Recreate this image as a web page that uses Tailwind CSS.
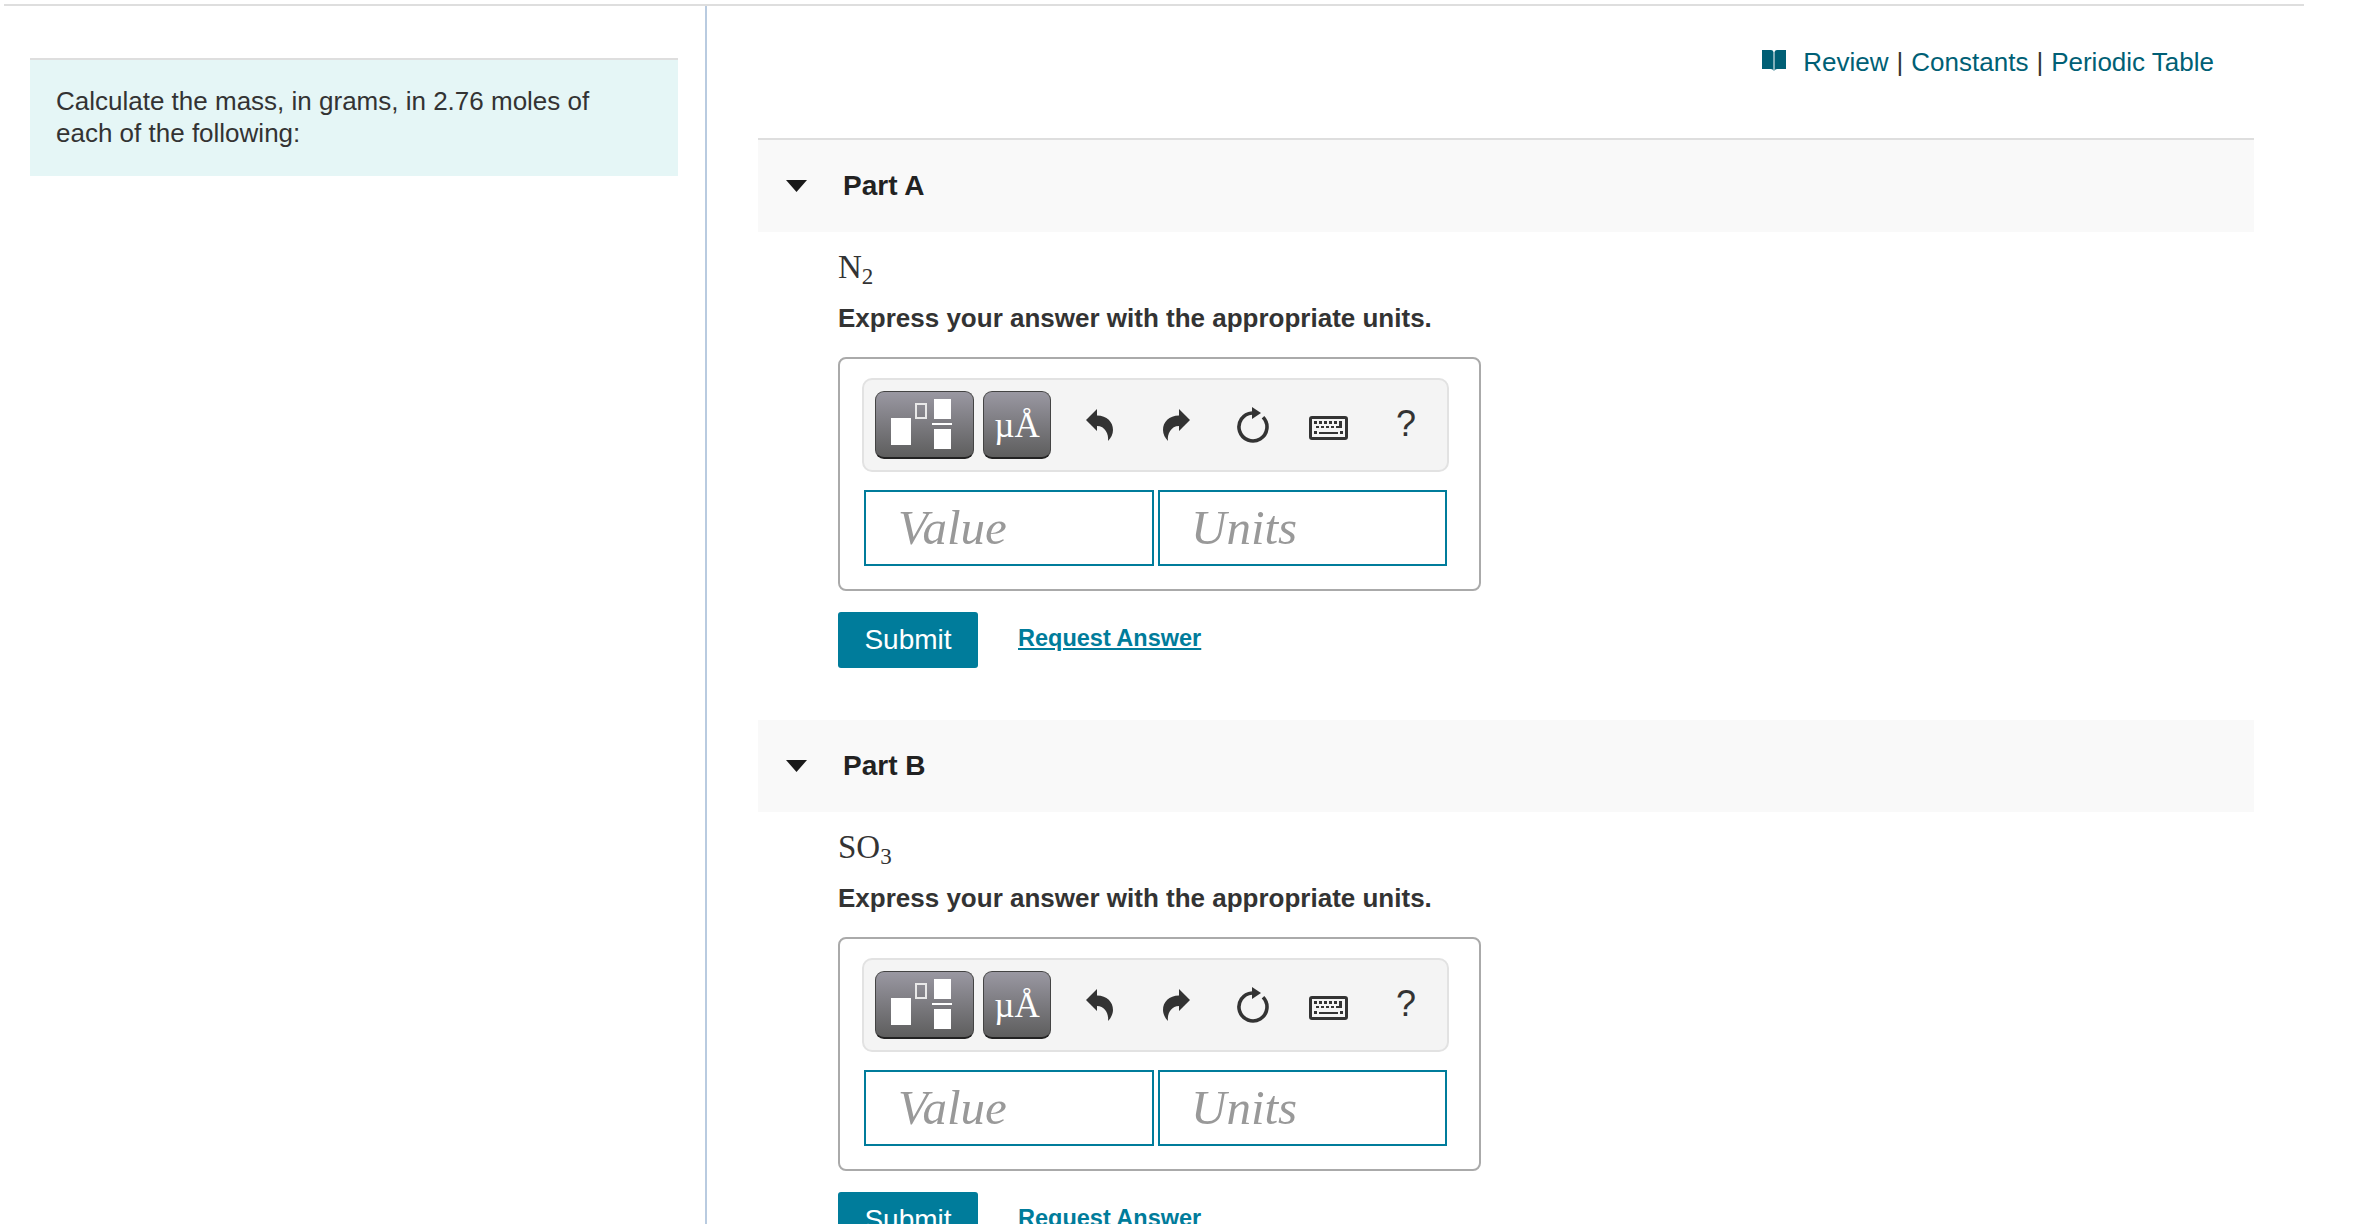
<!DOCTYPE html>
<html lang="en">
  <head>
    <meta charset="UTF-8" />
    <title>Part A / Part B</title>
    <script src="https://cdn.jsdelivr.net/npm/@tailwindcss/browser@4"></script>
  </head>
  <body class="relative bg-white font-['Liberation_Sans',sans-serif] text-[#333]">
    <div class="pt-1 pl-1 h-[1224px] overflow-hidden">
      <div class="flex w-[2300px] h-[1220px] border-t-2 border-[#dedede] overflow-hidden">
        <!-- Left column -->
        <div class="w-[703px] shrink-0 border-r-2 border-[#b9cbe0] pl-[26px] pt-[52px]">
          <div class="w-[648px] h-[118px] border-t-2 border-[#dedede] bg-[#e5f6f6] pl-[26px] pt-[25px] text-[26px] leading-[32px]">
            Calculate the mass, in grams, in 2.76 moles of<br />each of the following:
          </div>
        </div>

        <!-- Right column -->
        <div class="w-[1547px] shrink-0 pl-[51px]">
          <div class="w-[1496px]">
            <!-- Links -->
            <div class="h-[132px] flex items-start justify-end pr-[40px] pt-[40px] text-[26px] leading-[32px]">
              <svg class="w-6 h-[21px] mt-[4px] mr-[17px]" viewBox="0 0 24 21" fill="#005f75">
                <path d="M0 0 H9 Q11 0 11.5 2 V21 Q11 19 9 19 H0 Z" />
                <path d="M24 0 H15 Q13 0 12.5 2 V21 Q13 19 15 19 H24 Z" />
              </svg>
              <a class="text-[#005f75]">Review</a><span class="mx-[8px]">|</span><a class="text-[#005f75]">Constants</a><span class="mx-[8px]">|</span><a class="text-[#005f75]">Periodic Table</a>
            </div>

            <!-- Part A -->
            <section class="h-[580px]">
              <div class="h-[94px] border-t-2 border-[#dedede] bg-[#f9f9f9] flex items-center">
                <svg class="w-[21px] h-3 ml-7 mr-[36px]" viewBox="0 0 21 12" fill="#1a1a1a"><path d="M0 0 H21 L10.5 12 Z" /></svg>
                <h2 class="font-bold text-[28px] text-[#222]">Part A</h2>
              </div>
              <div class="pl-[80px]">
                <p class="font-['Liberation_Serif',serif] text-[33px] leading-[36px] mt-[17px]">N<sub class="text-[23px]">2</sub></p>
                <p class="font-bold text-[26px] leading-[32px] mt-[17px]">Express your answer with the appropriate units.</p>
                <div class="w-[643px] h-[234px] mt-[23px] border-2 border-[#aaaaaa] rounded-lg pt-[19px] pl-[22px]">
                  <div class="w-[587px] h-[94px] flex items-center border-2 border-[#e2e2e2] rounded-[10px] bg-[#f4f4f4] pl-[11px]">
                    <div class="w-[99px] h-[68px] rounded-[9px] border border-[#444] border-b-2 border-b-[#222] bg-gradient-to-b from-[#9a98a2] to-[#5e5e5e] relative">
                      <span class="absolute left-[15px] top-[26px] w-5 h-[27px] bg-white"></span>
                      <span class="absolute left-[39px] top-[11px] w-3 h-4 border-2 border-[#e8e8e8]"></span>
                      <span class="absolute left-[58px] top-[7px] w-[17px] h-5 bg-white"></span>
                      <span class="absolute left-[56px] top-[31px] w-5 h-[2px] bg-white"></span>
                      <span class="absolute left-[58px] top-[37px] w-[17px] h-5 bg-white"></span>
                    </div>
                    <div class="w-[68px] h-[68px] ml-[9px] pt-[3px] rounded-[9px] border border-[#444] border-b-2 border-b-[#222] bg-gradient-to-b from-[#9a98a2] to-[#5e5e5e] flex items-center justify-center font-['Liberation_Serif',serif] text-[35px] text-white">µÅ</div>
                    <svg class="w-[27px] h-8 ml-[35px] mt-[-1px]" viewBox="0 0 27 32" fill="#333"><path d="M0 11 L11 0 V6.5 C21 6.5 27 13 27 21 C27 25 25 29 22 32 C23 25 19 17 11 17 V22 Z" /></svg>
                    <svg class="w-[27px] h-8 ml-[50px] mt-[-1px]" viewBox="0 0 27 32" fill="#333"><path d="M27 11 L16 0 V6.5 C6 6.5 0 13 0 21 C0 25 2 29 5 32 C4 25 8 17 16 17 V22 Z" /></svg>
                    <svg class="w-8 h-9 ml-[47px]" viewBox="0 0 32 36" fill="none" stroke="#333" stroke-width="3.6"><path d="M26 10.2 A14 14 0 1 1 15 6" /><path d="M15 0 L24 6 L15 12 Z" fill="#333" stroke="none" /></svg>
                    <svg class="w-[39px] h-6 ml-10 mt-[5px]" viewBox="0 0 39 24" fill="#333"><path fill-rule="evenodd" d="M3 0 H36 Q39 0 39 3 V21 Q39 24 36 24 H3 Q0 24 0 21 V3 Q0 0 3 0 Z M3 3 V21 H36 V3 Z" /><path d="M5 5h3v3H5zM10 5h3v3h-3zM15 5h3v3h-3zM20 5h3v3h-3zM25 5h3v3h-3zM30 5h3v7h-6v-2h3zM7 10h3v2H7zM12 10h3v2h-3zM17 10h3v2h-3zM22 10h3v2h-3zM5 15h3v3H5zM10 16h19v2H10zM31 15h3v3h-3z" /></svg>
                    <span class="ml-[48px] mt-[-3px] text-[36px] leading-none text-[#333]">?</span>
                  </div>
                  <div class="flex gap-[4px] mt-[18px] ml-[2px]">
                    <div class="w-[290px] h-[76px] border-2 border-[#007c9b] pl-[32px] font-['Liberation_Serif',serif] italic text-[49px] leading-[72px] text-[#999]">Value</div>
                    <div class="w-[289px] h-[76px] border-2 border-[#007c9b] pl-[31px] font-['Liberation_Serif',serif] italic text-[49px] leading-[72px] text-[#999]">Units</div>
                  </div>
                </div>
                <div class="flex items-start mt-[21px]">
                  <button class="w-[140px] h-14 rounded-[3px] bg-[#007c9b] text-white text-[28px]">Submit</button>
                  <a class="ml-10 mt-[12px] font-bold text-[23.5px] leading-[28px] text-[#007c9b] underline">Request Answer</a>
                </div>
              </div>
            </section>

            <!-- Part B -->
            <section>
              <div class="h-[94px] border-t-2 border-white bg-[#f9f9f9] flex items-center">
                <svg class="w-[21px] h-3 ml-7 mr-[36px]" viewBox="0 0 21 12" fill="#1a1a1a"><path d="M0 0 H21 L10.5 12 Z" /></svg>
                <h2 class="font-bold text-[28px] text-[#222]">Part B</h2>
              </div>
              <div class="pl-[80px]">
                <p class="font-['Liberation_Serif',serif] text-[33px] leading-[36px] mt-[17px]">SO<sub class="text-[23px]">3</sub></p>
                <p class="font-bold text-[26px] leading-[32px] mt-[17px]">Express your answer with the appropriate units.</p>
                <div class="w-[643px] h-[234px] mt-[23px] border-2 border-[#aaaaaa] rounded-lg pt-[19px] pl-[22px]">
                  <div class="w-[587px] h-[94px] flex items-center border-2 border-[#e2e2e2] rounded-[10px] bg-[#f4f4f4] pl-[11px]">
                    <div class="w-[99px] h-[68px] rounded-[9px] border border-[#444] border-b-2 border-b-[#222] bg-gradient-to-b from-[#9a98a2] to-[#5e5e5e] relative">
                      <span class="absolute left-[15px] top-[26px] w-5 h-[27px] bg-white"></span>
                      <span class="absolute left-[39px] top-[11px] w-3 h-4 border-2 border-[#e8e8e8]"></span>
                      <span class="absolute left-[58px] top-[7px] w-[17px] h-5 bg-white"></span>
                      <span class="absolute left-[56px] top-[31px] w-5 h-[2px] bg-white"></span>
                      <span class="absolute left-[58px] top-[37px] w-[17px] h-5 bg-white"></span>
                    </div>
                    <div class="w-[68px] h-[68px] ml-[9px] pt-[3px] rounded-[9px] border border-[#444] border-b-2 border-b-[#222] bg-gradient-to-b from-[#9a98a2] to-[#5e5e5e] flex items-center justify-center font-['Liberation_Serif',serif] text-[35px] text-white">µÅ</div>
                    <svg class="w-[27px] h-8 ml-[35px] mt-[-1px]" viewBox="0 0 27 32" fill="#333"><path d="M0 11 L11 0 V6.5 C21 6.5 27 13 27 21 C27 25 25 29 22 32 C23 25 19 17 11 17 V22 Z" /></svg>
                    <svg class="w-[27px] h-8 ml-[50px] mt-[-1px]" viewBox="0 0 27 32" fill="#333"><path d="M27 11 L16 0 V6.5 C6 6.5 0 13 0 21 C0 25 2 29 5 32 C4 25 8 17 16 17 V22 Z" /></svg>
                    <svg class="w-8 h-9 ml-[47px]" viewBox="0 0 32 36" fill="none" stroke="#333" stroke-width="3.6"><path d="M26 10.2 A14 14 0 1 1 15 6" /><path d="M15 0 L24 6 L15 12 Z" fill="#333" stroke="none" /></svg>
                    <svg class="w-[39px] h-6 ml-10 mt-[5px]" viewBox="0 0 39 24" fill="#333"><path fill-rule="evenodd" d="M3 0 H36 Q39 0 39 3 V21 Q39 24 36 24 H3 Q0 24 0 21 V3 Q0 0 3 0 Z M3 3 V21 H36 V3 Z" /><path d="M5 5h3v3H5zM10 5h3v3h-3zM15 5h3v3h-3zM20 5h3v3h-3zM25 5h3v3h-3zM30 5h3v7h-6v-2h3zM7 10h3v2H7zM12 10h3v2h-3zM17 10h3v2h-3zM22 10h3v2h-3zM5 15h3v3H5zM10 16h19v2H10zM31 15h3v3h-3z" /></svg>
                    <span class="ml-[48px] mt-[-3px] text-[36px] leading-none text-[#333]">?</span>
                  </div>
                  <div class="flex gap-[4px] mt-[18px] ml-[2px]">
                    <div class="w-[290px] h-[76px] border-2 border-[#007c9b] pl-[32px] font-['Liberation_Serif',serif] italic text-[49px] leading-[72px] text-[#999]">Value</div>
                    <div class="w-[289px] h-[76px] border-2 border-[#007c9b] pl-[31px] font-['Liberation_Serif',serif] italic text-[49px] leading-[72px] text-[#999]">Units</div>
                  </div>
                </div>
                <div class="flex items-start mt-[21px]">
                  <button class="w-[140px] h-14 rounded-[3px] bg-[#007c9b] text-white text-[28px]">Submit</button>
                  <a class="ml-10 mt-[12px] font-bold text-[23.5px] leading-[28px] text-[#007c9b] underline">Request Answer</a>
                </div>
              </div>
            </section>
          </div>
        </div>
      </div>
    </div>
    <!-- sliver of something under the clipped frame -->
    <span class="absolute left-[1073px] top-[1225px] w-6 h-[3px] rounded-t-full bg-[#2d8ba6]"></span>
  </body>
</html>
